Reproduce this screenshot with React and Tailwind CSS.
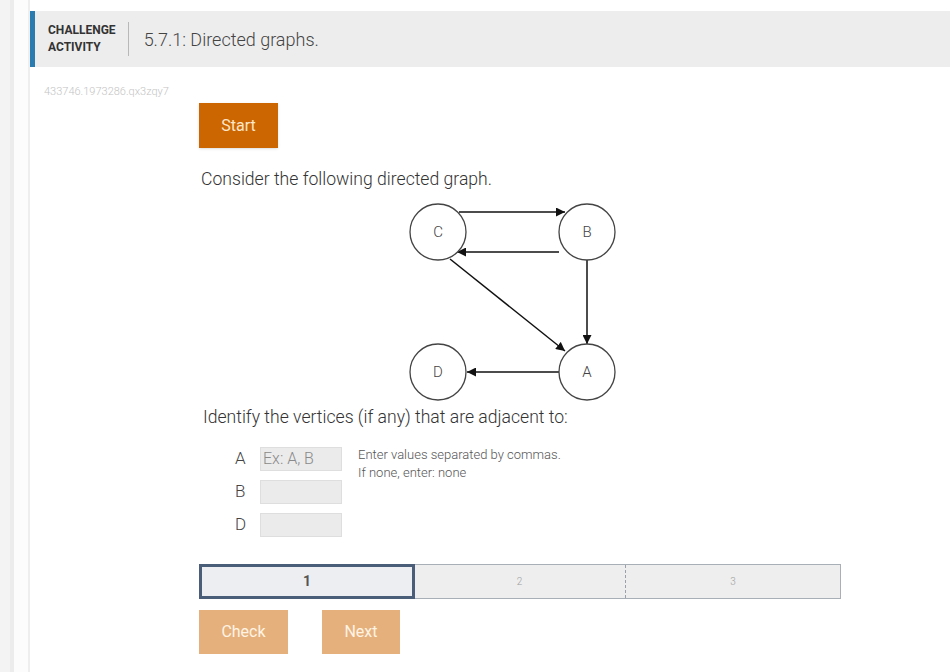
const Arrow = ({ id }) => (
    <marker id={id} viewBox="0 0 10 10" refX="10" refY="5" markerWidth="9" markerHeight="9" orient="auto-start-reverse" markerUnits="userSpaceOnUse">
        <path d="M0,0 L10,5 L0,10 z" fill="#111" />
    </marker>
);

const Node = ({ cx, cy, label }) => (
    <g>
        <circle cx={cx} cy={cy} r="28" fill="#fff" stroke="#444" strokeWidth="1.3" />
        <text x={cx} y={cy + 5} textAnchor="middle" fontSize="15" fontWeight="300" fill="#444" fontFamily="Roboto, sans-serif">{label}</text>
    </g>
);

const Graph = () => (
    <svg width="220" height="209" viewBox="0 0 220 209" className="ml-[206px] mt-[5px] block">
        <defs>
            <Arrow id="ah" />
        </defs>
        <g stroke="#111" strokeWidth="1.5" markerEnd="url(#ah)">
            <line x1="54" y1="16" x2="160" y2="16" />
            <line x1="154" y1="56" x2="52" y2="56" />
            <line x1="45" y1="63" x2="160" y2="155" />
            <line x1="182" y1="64" x2="182" y2="148" />
            <line x1="154" y1="176" x2="62" y2="176" />
        </g>
        <Node cx={33} cy={36} label="C" />
        <Node cx={182} cy={36} label="B" />
        <Node cx={33} cy={176} label="D" />
        <Node cx={182} cy={176} label="A" />
    </svg>
);

const InputRow = ({ label, placeholder }) => (
    <div className="flex items-center h-6">
        <span className="w-[25px] text-[17px] font-light text-[#444]">{label}</span>
        <div className="w-[82px] h-6 bg-[#ebebeb] border border-[#dedede] text-[16px] font-light text-[#8a8a8a] leading-[22px] pl-[2px]">
            {placeholder}
        </div>
    </div>
);

export default function App() {
    return (
        <div className="w-[950px] h-[672px] overflow-hidden bg-white flex" style={{ fontFamily: 'Roboto, "Liberation Sans", sans-serif' }}>
            {/* left gutter */}
            <div className="w-[10px] bg-[#f3f3f3]" />
            <div className="w-[4px] bg-[#ececec]" />
            <div className="w-[14px] bg-[#fcfcfc]" />
            <div className="w-[2px] bg-[#eeeeee]" />

            <div className="flex-1 pt-[11px]">
                {/* Header */}
                <header className="h-14 bg-[#ededed] border-l-[5px] border-[#2a7bb0] flex items-center">
                    <div className="pl-[13px] pr-[12px] text-[12px] font-bold text-[#333] leading-[17px]">
                        CHALLENGE<br />ACTIVITY
                    </div>
                    <div className="w-px h-[34px] bg-[#b8b8b8]" />
                    <h1 className="pl-[15px] text-[18px] font-light text-[#444]">5.7.1: Directed graphs.</h1>
                </header>

                <div className="pl-[14px] pt-[19px] text-[11px] leading-[12px] font-light text-[#c4c4c4]">433746.1973286.qx3zqy7</div>

                <main className="pl-[169px] pt-[5px]">
                    <button className="w-[79px] h-[45px] bg-[#cc6600] text-[#fde7cc] text-[16px] shadow-sm">Start</button>

                    <p className="mt-[19px] pl-[2px] text-[17.6px] leading-6 font-light text-[#333]">Consider the following directed graph.</p>

                    <Graph />

                    <p className="pl-[4px] text-[17.6px] leading-6 font-light text-[#333]">Identify the vertices (if any) that are adjacent to:</p>

                    <div className="mt-[18px] pl-[36px] flex">
                        <div className="flex flex-col gap-[9px]">
                            <InputRow label="A" placeholder="Ex: A, B" />
                            <InputRow label="B" />
                            <InputRow label="D" />
                        </div>
                        <div className="ml-[16px] text-[13px] font-light leading-[18px] text-[#555] -mt-[1px]">
                            <div>Enter values separated by commas.</div>
                            <div>If none, enter: none</div>
                        </div>
                    </div>

                    {/* Progress */}
                    <div className="mt-[27px] w-[642px] h-[35px] flex bg-[#eeeeee] border border-[#a9afb6]">
                        <div className="w-[216px] -m-px h-[35px] border-[3px] border-[#4b5e79] flex items-center justify-center text-[14px] font-bold text-[#555] bg-[#eceef1]">1</div>
                        <div className="w-[212px] flex items-center justify-center text-[10px] font-light text-[#a0a0a0] border-r border-dashed border-[#9aa1aa]">2</div>
                        <div className="flex-1 flex items-center justify-center text-[10px] font-light text-[#a0a0a0]">3</div>
                    </div>

                    <div className="mt-[11px] flex gap-[34px]">
                        <button className="w-[89px] h-[44px] bg-[#e6b07c] text-[#fff4e4] text-[16px]">Check</button>
                        <button className="w-[78px] h-[44px] bg-[#e6b07c] text-[#fff4e4] text-[16px]">Next</button>
                    </div>
                </main>
            </div>
        </div>
    );
}
